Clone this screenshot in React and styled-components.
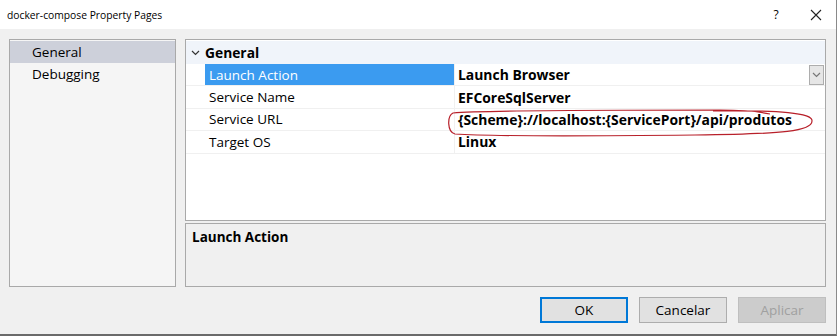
import React from 'react';
import styled, { createGlobalStyle } from 'styled-components';

const GlobalStyle = createGlobalStyle`
  html, body { margin: 0; padding: 0; background: #f0f0f0; }
  body { font-family: "Open Sans", "Noto Sans", sans-serif; color: #000; }
`;

const Window = styled.div`
  width: 837px;
  height: 336px;
  box-sizing: border-box;
  display: flex;
  flex-direction: column;
  background: #f0f0f0;
  border-bottom: 2px solid #6a6a6a;
  border-right: 1px solid #8a8a8a;
  overflow: hidden;
`;

const TitleBar = styled.div`
  height: 29px;
  flex: none;
  display: flex;
  align-items: center;
  background: #fff;
  padding-left: 7px;
  font-size: 10.3px;
`;

const Title = styled.div`
  flex: 1;
`;

const TitleButton = styled.div`
  width: 40px;
  display: flex;
  justify-content: center;
  align-items: center;
  font-size: ${p => p.$size || 13}px;
`;

const Body = styled.div`
  flex: 1;
  display: flex;
  gap: 9px;
  padding: 10px 10px 0 9px;
`;

const Sidebar = styled.div`
  width: 167px;
  height: 248px;
  box-sizing: border-box;
  border: 1px solid #a9a9a9;
  background: #f5f5f5;
  padding-top: 1px;
`;

const NavItem = styled.div`
  height: 22px;
  display: flex;
  align-items: center;
  padding-left: 22px;
  font-size: 13.5px;
  background: ${p => (p.$active ? '#cdd0da' : 'transparent')};
`;

const Main = styled.div`
  flex: 1;
  display: flex;
  flex-direction: column;
  gap: 2px;
`;

const Grid = styled.div`
  position: relative;
  height: 182px;
  box-sizing: border-box;
  border: 1px solid #a9a9a9;
  background: #fff;
  padding-top: 1px;
`;

const CategoryRow = styled.div`
  height: 23px;
  display: flex;
  align-items: center;
  background: #f0f4fa;
  font-weight: 700;
  font-size: 13.8px;
`;

const Gutter = styled.div`
  width: 19px;
  flex: none;
  display: flex;
  justify-content: center;
  align-items: center;
`;

const PropRow = styled.div`
  height: 22.4px;
  display: flex;
  border-bottom: 1px solid #f0f0f0;
  box-sizing: border-box;
`;

const PropName = styled.div`
  width: 250px;
  flex: none;
  display: flex;
  align-items: center;
  padding-left: 4px;
  box-sizing: border-box;
  font-size: 13.5px;
  background: ${p => (p.$selected ? '#3b9bf0' : 'transparent')};
  color: ${p => (p.$selected ? '#fff' : '#000')};
  border-right: 1px solid #f0f0f0;
`;

const PropValue = styled.div`
  flex: 1;
  display: flex;
  align-items: center;
  padding-left: 3px;
  font-size: 13.9px;
  font-weight: 700;
`;

const DropButton = styled.div`
  width: 15px;
  height: 20px;
  margin-right: 1px;
  box-sizing: border-box;
  border: 1px solid #adadad;
  background: #e6e6e6;
  display: flex;
  align-items: center;
  justify-content: center;
`;

const Highlight = styled.svg`
  position: absolute;
  left: 259px;
  top: 68px;
  pointer-events: none;
`;

const Description = styled.div`
  height: 64px;
  box-sizing: border-box;
  border: 1px solid #a9a9a9;
  background: #f0f0f0;
  padding: 4px 6px;
  font-weight: 700;
  font-size: 13.5px;
`;

const Footer = styled.div`
  height: 45px;
  flex: none;
  display: flex;
  justify-content: flex-end;
  align-items: flex-start;
  gap: 11px;
  padding: 8px 10px 0 0;
  box-sizing: border-box;
`;

const Button = styled.div`
  width: 88px;
  height: 26px;
  box-sizing: border-box;
  display: flex;
  align-items: center;
  justify-content: center;
  font-size: 13.5px;
  border: 1px solid ${p => (p.$primary ? '#0078d7' : p.$disabled ? '#bfbfbf' : '#adadad')};
  box-shadow: ${p => (p.$primary ? 'inset 0 0 0 1px #0078d7' : 'none')};
  background: ${p => (p.$disabled ? '#cccccc' : '#e1e1e1')};
  color: ${p => (p.$disabled ? '#a0a0a0' : '#000')};
`;

const Chevron = ({ color = '#333' }) => (
  <svg width="9" height="6" viewBox="0 0 9 6">
    <path d="M1 1 L4.5 4.5 L8 1" fill="none" stroke={color} strokeWidth="1.2" />
  </svg>
);

const rows = [
  { name: 'Launch Action', value: 'Launch Browser', selected: true, drop: true },
  { name: 'Service Name', value: 'EFCoreSqlServer' },
  { name: 'Service URL', value: '{Scheme}://localhost:{ServicePort}/api/produtos' },
  { name: 'Target OS', value: 'Linux' },
];

export default function App() {
  return (
    <>
      <GlobalStyle />
      <Window>
        <TitleBar>
          <Title>docker-compose Property Pages</Title>
          <TitleButton $size={12}>?</TitleButton>
          <TitleButton>
            <svg width="12" height="12" viewBox="0 0 12 12">
              <path d="M1 1 L11 11 M11 1 L1 11" stroke="#222" strokeWidth="1.1" />
            </svg>
          </TitleButton>
        </TitleBar>
        <Body>
          <Sidebar>
            <NavItem $active>General</NavItem>
            <NavItem>Debugging</NavItem>
          </Sidebar>
          <Main>
            <Grid>
              <CategoryRow>
                <Gutter><Chevron /></Gutter>
                General
              </CategoryRow>
              {rows.map(r => (
                <PropRow key={r.name}>
                  <Gutter />
                  <PropName $selected={r.selected}>{r.name}</PropName>
                  <PropValue>
                    <span style={{ flex: 1 }}>{r.value}</span>
                    {r.drop && <DropButton><Chevron color="#777" /></DropButton>}
                  </PropValue>
                </PropRow>
              ))}
              <Highlight width="372" height="30" viewBox="0 0 372 30">
                <path
                  d="M268 3 C335 2 368 5 367 13 C367 23 340 26 250 27 C150 28 40 28 10 26 C2 24 2 8 8 5 C40 2 150 2 275 2 C300 2 316 4 325 6"
                  fill="none"
                  stroke="#b8202a"
                  strokeWidth="1.2"
                />
              </Highlight>
            </Grid>
            <Description>Launch Action</Description>
          </Main>
        </Body>
        <Footer>
          <Button $primary>OK</Button>
          <Button>Cancelar</Button>
          <Button $disabled>Aplicar</Button>
        </Footer>
      </Window>
    </>
  );
}
